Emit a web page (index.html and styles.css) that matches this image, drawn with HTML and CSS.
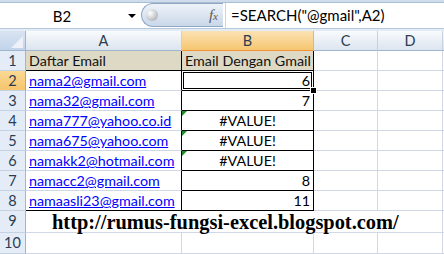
FILE: index.html
```html
<!DOCTYPE html>
<html lang="id">
<head>
    <meta charset="UTF-8">
    <title>Rumus SEARCH</title>
    <link rel="stylesheet" href="styles.css">
</head>
<body>
    <div class="topline"></div>

    <div class="fbar">
        <div class="namebox">
            <span class="ref">B2</span>
            <span class="drop"></span>
        </div>
        <div class="fx-pill">
            <span class="knob"></span>
            <span class="fx">f<small>x</small></span>
        </div>
        <div class="formula">=SEARCH("@gmail",A2)</div>
    </div>

    <div class="gap"></div>

    <div class="sheet">
        <div class="corner"><span class="corner-tri"></span></div>
        <div class="colhdr">A</div>
        <div class="colhdr sel">B</div>
        <div class="colhdr">C</div>
        <div class="colhdr">D</div>
        <div class="colhdr"></div>

        <div class="rowhdr">1</div>
        <div class="cell tan bl-r bl-b">Daftar Email</div>
        <div class="cell tan center bl-r bl-b">Email Dengan Gmail</div>
        <div class="cell"></div><div class="cell"></div><div class="cell"></div>

        <div class="rowhdr sel">2</div>
        <div class="cell bl-r"><a href="#">nama2@gmail.com</a></div>
        <div class="cell right bl-r bl-b active">6<span class="handle"></span></div>
        <div class="cell"></div><div class="cell"></div><div class="cell"></div>

        <div class="rowhdr">3</div>
        <div class="cell bl-r"><a href="#">nama32@gmail.com</a></div>
        <div class="cell right bl-r bl-b">7</div>
        <div class="cell"></div><div class="cell"></div><div class="cell"></div>

        <div class="rowhdr">4</div>
        <div class="cell bl-r"><a href="#">nama777@yahoo.co.id</a></div>
        <div class="cell center bl-r bl-b err">#VALUE!</div>
        <div class="cell"></div><div class="cell"></div><div class="cell"></div>

        <div class="rowhdr">5</div>
        <div class="cell bl-r"><a href="#">nama675@yahoo.com</a></div>
        <div class="cell center bl-r bl-b err">#VALUE!</div>
        <div class="cell"></div><div class="cell"></div><div class="cell"></div>

        <div class="rowhdr">6</div>
        <div class="cell bl-r"><a href="#">namakk2@hotmail.com</a></div>
        <div class="cell center bl-r bl-b err">#VALUE!</div>
        <div class="cell"></div><div class="cell"></div><div class="cell"></div>

        <div class="rowhdr">7</div>
        <div class="cell bl-r"><a href="#">namacc2@gmail.com</a></div>
        <div class="cell right bl-r bl-b">8</div>
        <div class="cell"></div><div class="cell"></div><div class="cell"></div>

        <div class="rowhdr">8</div>
        <div class="cell bl-r bl-b"><a href="#">namaasli23@gmail.com</a></div>
        <div class="cell right bl-r bl-b">11</div>
        <div class="cell"></div><div class="cell"></div><div class="cell"></div>

        <div class="rowhdr">9</div>
        <div class="cell url">http://rumus-fungsi-excel.blogspot.com/</div>
        <div class="cell"></div>

        <div class="rowhdr">10</div>
        <div class="cell"></div><div class="cell"></div><div class="cell"></div><div class="cell"></div><div class="cell"></div>
    </div>
</body>
</html>
```

FILE: styles.css
```css
* {
    margin: 0;
    padding: 0;
    box-sizing: border-box;
}

body {
    width: 444px;
    height: 254px;
    overflow: hidden;
    background: #ffffff;
    font-family: Lato, 'Liberation Sans', sans-serif;
    font-size: 14.3px;
    color: #000;
}

/* barre du haut */
.topline {
    height: 3px;
    background: #cfdcec;
    border-bottom: 1px solid #a9bdd6;
}

.fbar {
    display: flex;
    height: 26px;
    background: #fff;
    border-bottom: 1px solid #b7c8dc;
}

.namebox {
    width: 141px;
    display: flex;
    align-items: center;
}

.ref {
    width: 124px;
    text-align: center;
    font-size: 15px;
}

.drop {
    width: 0;
    height: 0;
    margin-left: 4px;
    border-left: 4px solid transparent;
    border-right: 4px solid transparent;
    border-top: 4px solid #000;
}

.fx-pill {
    width: 82px;
    height: 24px;
    display: flex;
    align-items: center;
    border: 1px solid #8fa7c5;
    border-right: none;
    border-radius: 12px 0 0 12px;
    background: linear-gradient(#eef3f9, #c9d7e8);
}

.knob {
    width: 12px;
    height: 12px;
    margin-left: 4px;
    border-radius: 50%;
    background: radial-gradient(circle at 35% 35%, #ffffff, #9a9ea4);
}

.fx {
    margin-left: auto;
    margin-right: 5px;
    font-family: 'Liberation Serif', serif;
    font-style: italic;
    font-size: 15px;
    color: #5a5a5a;
}

.fx small {
    font-size: 11px;
}

.formula {
    flex: 1;
    margin-left: 2px;
    padding-left: 5px;
    border-left: 1px solid #c9d5e4;
    line-height: 25px;
    font-size: 15px;
}

.gap {
    height: 2px;
    background: #e3ebf5;
}

/* feuille */
.sheet {
    display: grid;
    grid-template-columns: 26px 156px 132px 64px 65px 1fr;
    grid-template-rows: repeat(9, 20px) 22px 21px;
}

.corner {
    position: relative;
    background: linear-gradient(#d9e4f2, #c2d3ea);
    border-right: 1px solid #9eb6ce;
    border-bottom: 1px solid #9eb6ce;
}

.corner-tri {
    position: absolute;
    right: 2px;
    bottom: 2px;
    width: 0;
    height: 0;
    border-left: 12px solid transparent;
    border-bottom: 12px solid #eef2f8;
}

.colhdr {
    text-align: center;
    line-height: 19px;
    font-size: 14.5px;
    color: #2a3d52;
    background: linear-gradient(#f9fbfd, #dce4ef);
    border-right: 1px solid #c5d2e3;
    border-bottom: 1px solid #9eb6ce;
}

.colhdr.sel {
    background: linear-gradient(#fbe2b4, #f6c670);
    border-right-color: #f0b459;
    border-bottom-color: #f29436;
}

.rowhdr {
    text-align: center;
    line-height: 19px;
    font-size: 14.5px;
    color: #2a3d52;
    background: #e4ecf7;
    border-right: 1px solid #9eb6ce;
    border-bottom: 1px solid #c5d2e3;
}

.rowhdr.sel {
    background: linear-gradient(#fbd995, #f5c56c);
    border-right-color: #f29436;
}

.cell {
    position: relative;
    padding: 0 3px;
    line-height: 19px;
    white-space: nowrap;
    border-right: 1px solid #d0d7e5;
    border-bottom: 1px solid #d0d7e5;
}

.cell a {
    color: #0000ff;
    text-decoration: underline;
}

.tan {
    background: #ddd9c4;
    color: #111;
}

.center { text-align: center; }
.right { text-align: right; }

.bl-r { border-right-color: #000; }
.bl-b { border-bottom-color: #000; }

.active {
    box-shadow: inset 0 0 0 1px #fff, inset 0 0 0 2px #000;
}

.handle {
    position: absolute;
    right: -4px;
    bottom: -4px;
    z-index: 2;
    width: 7px;
    height: 7px;
    background: #000;
    border: 1px solid #fff;
}

.err::before {
    content: '';
    position: absolute;
    left: 0;
    top: 0;
    border-top: 5px solid #1e8c2b;
    border-right: 5px solid transparent;
}

.url {
    grid-column: span 4;
    padding-left: 26px;
    font-family: 'Liberation Serif', serif;
    font-weight: bold;
    font-size: 20.4px;
    line-height: 22px;
}
```
